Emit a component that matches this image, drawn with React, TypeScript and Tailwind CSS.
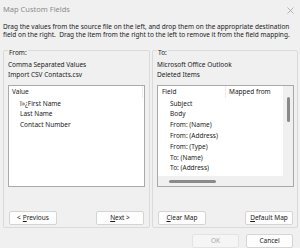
import React from "react";

const font = { fontFamily: '"Noto Sans", "Open Sans", sans-serif' };

function Btn({ children, className = "", disabled = false }: { children: React.ReactNode; className?: string; disabled?: boolean }) {
  return (
    <div
      className={`h-[14px] flex items-center justify-center rounded-[2px] border text-[6.5px] leading-none ${
        disabled ? "border-[#e3e3e3] bg-[#f5f5f5] text-[#a6a6a6]" : "border-[#d4d4d4] bg-[#fdfdfd] text-[#1b1b1b]"
      } ${className}`}
    >
      {children}
    </div>
  );
}

function Group({ label, lines, children }: { label: string; lines: string[]; children: React.ReactNode }) {
  return (
    <div className="relative h-[178px] rounded-[2px] border border-[#dadada] px-[4px] pt-[9px]">
      <span className="absolute left-[4px] top-[-2px] bg-[#f0f0f0] px-[1px] text-[6.5px] leading-[8px] text-[#1b1b1b]">{label}</span>
      {lines.map((l) => (
        <div key={l} className="h-[9.5px] text-[6.5px] leading-[9.5px] text-[#1b1b1b] whitespace-nowrap">
          {l}
        </div>
      ))}
      {children}
    </div>
  );
}

export default function App() {
  const sourceRows = ["ï»¿First Name", "Last Name", "Contact Number"];
  const destRows = ["Subject", "Body", "From: (Name)", "From: (Address)", "From: (Type)", "To: (Name)", "To: (Address)"];

  return (
    <div className="w-[300px] h-[248px] bg-[#f0f0f0] overflow-hidden" style={font}>
      {/* title bar */}
      <div className="h-[20px] flex items-center justify-between pl-[3px] pr-[6px]">
        <span className="text-[7.5px] text-[#8c8c8c]">Map Custom Fields</span>
        <svg width="7" height="7" viewBox="0 0 7 7" className="text-[#9a9a9a]">
          <path d="M0.5 0.5 L6.5 6.5 M6.5 0.5 L0.5 6.5" stroke="currentColor" strokeWidth="0.7" />
        </svg>
      </div>

      {/* instructions */}
      <div className="px-[3px] pt-[3px] h-[30px] text-[6.5px] leading-[7.7px] text-[#1b1b1b] whitespace-nowrap">
        <div>Drag the values from the source file on the left, and drop them on the appropriate destination</div>
        <div>field on the right.&nbsp; Drag the item from the right to the left to remove it from the field mapping.</div>
      </div>

      <div className="flex gap-[2px] pl-[3px]">
        <div className="w-[147px]">
          <Group label="From:" lines={["Comma Separated Values", "Import CSV Contacts.csv"]}>
            <div className="mt-[6px] h-[102px] w-[137px] border border-[#a9a9a9] bg-white">
              <div className="h-[12px] flex items-center pl-[3px] text-[6.5px] text-[#1b1b1b] border-r border-[#ececec] w-[134px]">Value</div>
              {sourceRows.map((r) => (
                <div key={r} className="h-[10.8px] flex items-center pl-[11px] text-[6.5px] text-[#1b1b1b]">
                  {r}
                </div>
              ))}
            </div>
            <div className="mt-[24px] flex justify-between w-[136px] pl-[1px]">
              <Btn className="w-[48px]">
                &lt; <span className="underline ml-[2px]">P</span>revious
              </Btn>
              <Btn className="w-[48px]">
                <span className="underline">N</span>ext &gt;
              </Btn>
            </div>
          </Group>
        </div>

        <div className="w-[146px]">
          <Group label="To:" lines={["Microsoft Office Outlook", "Deleted Items"]}>
            <div className="mt-[6px] h-[102px] w-[137px] border border-[#a9a9a9] bg-white flex flex-col">
              <div className="flex flex-1 min-h-0">
                <div className="flex-1 min-w-0 overflow-hidden">
                  <div className="h-[12px] flex text-[6.5px] text-[#1b1b1b]">
                    <div className="w-[68px] flex items-center pl-[4px] border-r border-[#ececec]">Field</div>
                    <div className="flex items-center pl-[3px]">Mapped from</div>
                  </div>
                  {destRows.map((r) => (
                    <div key={r} className="h-[10.8px] flex items-center pl-[12px] text-[6.5px] text-[#1b1b1b] whitespace-nowrap">
                      {r}
                    </div>
                  ))}
                </div>
                <div className="w-[10px] bg-[#f0f0f0] flex justify-center pt-[11px]">
                  <div className="w-[3px] h-[25px] rounded-full bg-[#8a8a8a]" />
                </div>
              </div>
              <div className="h-[10px] bg-[#f0f0f0] flex items-center pl-[11px]">
                <div className="w-[47px] h-[3px] rounded-full bg-[#8a8a8a]" />
              </div>
            </div>
            <div className="mt-[24px] flex justify-between w-[136px] pl-[1px]">
              <Btn className="w-[48px]">
                <span className="underline">C</span>lear Map
              </Btn>
              <Btn className="w-[48px]">
                <span className="underline">D</span>efault Map
              </Btn>
            </div>
          </Group>
        </div>
      </div>

      <div className="flex justify-end gap-[7px] pr-[7px] mt-[6px]">
        <Btn disabled className="w-[47px]">OK</Btn>
        <Btn className="w-[47px]">Cancel</Btn>
      </div>
    </div>
  );
}
